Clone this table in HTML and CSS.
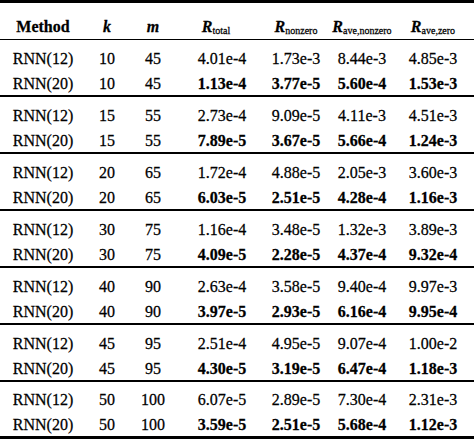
FILE: index.html
```html
<!DOCTYPE html>
<html>
<head>
<meta charset="utf-8">
<link rel="stylesheet" href="styles.css">
</head>
<body>
<div class="tbl">
  <div class="row head">
    <div class="c"><b>Method</b></div>
    <div class="c"><b><i>k</i></b></div>
    <div class="c"><b><i>m</i></b></div>
    <div class="c shift"><i class="r">R</i><sub>total</sub></div>
    <div class="c"><i class="r">R</i><sub>nonzero</sub></div>
    <div class="c"><i class="r">R</i><sub>ave,nonzero</sub></div>
    <div class="c"><i class="r">R</i><sub>ave,zero</sub></div>
  </div>

  <div class="group">
    <div class="row"><div class="c">RNN(12)</div><div class="c">10</div><div class="c">45</div><div class="c">4.01e-4</div><div class="c">1.73e-3</div><div class="c">8.44e-3</div><div class="c">4.85e-3</div></div>
    <div class="row best"><div class="c">RNN(20)</div><div class="c">10</div><div class="c">45</div><div class="c">1.13e-4</div><div class="c">3.77e-5</div><div class="c">5.60e-4</div><div class="c">1.53e-3</div></div>
  </div>
  <div class="group">
    <div class="row"><div class="c">RNN(12)</div><div class="c">15</div><div class="c">55</div><div class="c">2.73e-4</div><div class="c">9.09e-5</div><div class="c">4.11e-3</div><div class="c">4.51e-3</div></div>
    <div class="row best"><div class="c">RNN(20)</div><div class="c">15</div><div class="c">55</div><div class="c">7.89e-5</div><div class="c">3.67e-5</div><div class="c">5.66e-4</div><div class="c">1.24e-3</div></div>
  </div>
  <div class="group">
    <div class="row"><div class="c">RNN(12)</div><div class="c">20</div><div class="c">65</div><div class="c">1.72e-4</div><div class="c">4.88e-5</div><div class="c">2.05e-3</div><div class="c">3.60e-3</div></div>
    <div class="row best"><div class="c">RNN(20)</div><div class="c">20</div><div class="c">65</div><div class="c">6.03e-5</div><div class="c">2.51e-5</div><div class="c">4.28e-4</div><div class="c">1.16e-3</div></div>
  </div>
  <div class="group">
    <div class="row"><div class="c">RNN(12)</div><div class="c">30</div><div class="c">75</div><div class="c">1.16e-4</div><div class="c">3.48e-5</div><div class="c">1.32e-3</div><div class="c">3.89e-3</div></div>
    <div class="row best"><div class="c">RNN(20)</div><div class="c">30</div><div class="c">75</div><div class="c">4.09e-5</div><div class="c">2.28e-5</div><div class="c">4.37e-4</div><div class="c">9.32e-4</div></div>
  </div>
  <div class="group">
    <div class="row"><div class="c">RNN(12)</div><div class="c">40</div><div class="c">90</div><div class="c">2.63e-4</div><div class="c">3.58e-5</div><div class="c">9.40e-4</div><div class="c">9.97e-3</div></div>
    <div class="row best"><div class="c">RNN(20)</div><div class="c">40</div><div class="c">90</div><div class="c">3.97e-5</div><div class="c">2.93e-5</div><div class="c">6.16e-4</div><div class="c">9.95e-4</div></div>
  </div>
  <div class="group">
    <div class="row"><div class="c">RNN(12)</div><div class="c">45</div><div class="c">95</div><div class="c">2.51e-4</div><div class="c">4.95e-5</div><div class="c">9.07e-4</div><div class="c">1.00e-2</div></div>
    <div class="row best"><div class="c">RNN(20)</div><div class="c">45</div><div class="c">95</div><div class="c">4.30e-5</div><div class="c">3.19e-5</div><div class="c">6.47e-4</div><div class="c">1.18e-3</div></div>
  </div>
  <div class="group last">
    <div class="row"><div class="c">RNN(12)</div><div class="c">50</div><div class="c">100</div><div class="c">6.07e-5</div><div class="c">2.89e-5</div><div class="c">7.30e-4</div><div class="c">2.31e-3</div></div>
    <div class="row best"><div class="c">RNN(20)</div><div class="c">50</div><div class="c">100</div><div class="c">3.59e-5</div><div class="c">2.51e-5</div><div class="c">5.68e-4</div><div class="c">1.12e-3</div></div>
  </div>
</div>
</body>
</html>
```

FILE: styles.css
```css
html, body {
  margin: 0;
  padding: 0;
  background: #fff;
}
body {
  font-family: "Liberation Serif", "Times New Roman", serif;
  font-size: 16px;
  color: #000;
}
.tbl {
  width: 474px;
}
.row {
  display: grid;
  grid-template-columns: 86px 42px 50px 88px 60px 72px 70px 6px;
  height: 25px;
  line-height: 25px;
}
.c {
  text-align: center;
  white-space: nowrap;
  transform: scaleY(1.1);
  -webkit-text-stroke: 0.25px #000;
}
.head {
  border-top: 3px solid #000;
  border-bottom: 1.5px solid #000;
  height: 26px;
  line-height: 26px;
  padding-top: 10px;
}
.head .r {
  font-style: italic;
  font-weight: bold;
}
.head sub {
  font-size: 10px;
  vertical-align: -2px;
  line-height: 0;
}
.shift {
  padding-right: 12px;
}
.group {
  padding-top: 5px;
  border-bottom: 2px solid #000;
}
.group.last {
  padding-top: 4px;
  border-bottom-width: 3px;
}
.best .c:nth-child(n+4) {
  font-weight: bold;
}
```
